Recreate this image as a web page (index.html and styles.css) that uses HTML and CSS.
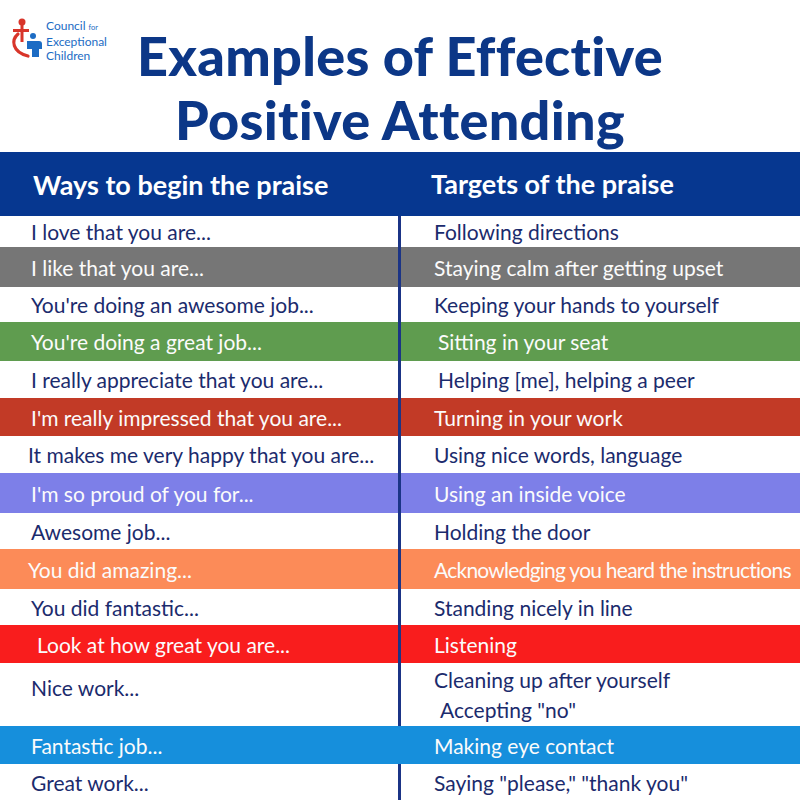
FILE: index.html
```html
<!DOCTYPE html>
<html lang="en">
<head>
<meta charset="utf-8">
<title>Examples of Effective Positive Attending</title>
<link rel="stylesheet" href="styles.css">
</head>
<body>
<div class="page">
  <header class="top">
    <div class="logo">
      <svg class="logo-mark" viewBox="0 0 36 40" width="36" height="40">
        <circle cx="14" cy="4" r="3.5" fill="#d8352a"/>
        <rect x="5" y="11" width="16" height="3" fill="#d8352a"/>
        <rect x="12.5" y="7" width="3" height="17" fill="#d8352a"/>
        <path d="M10 16 C3 22 4 34 20 38" fill="none" stroke="#d8352a" stroke-width="3.2" stroke-linecap="round"/>
        <circle cx="25" cy="18" r="3" fill="#1c6cc4"/>
        <path d="M19 23 L31 23 Q34 23 34 26 L34 31 L31 31 L31 39 L24 39 L24 31 L19 31 Z" fill="#1c6cc4"/>
      </svg>
      <div class="logo-text">
        <span class="lt-line">Council <small>for</small></span>
        <span class="lt-line">Exceptional</span>
        <span class="lt-line">Children</span>
      </div>
    </div>
    <h1 class="title">Examples of Effective<br>Positive Attending</h1>
    <div></div>
  </header>

  <section class="table">
    <div class="row head">
      <div class="cell">Ways to begin the praise</div>
      <div class="cell">Targets of the praise</div>
    </div>
    <div class="row r1">
      <div class="cell">I love that you are...</div>
      <div class="cell">Following directions</div>
    </div>
    <div class="row r2 gray">
      <div class="cell">I like that you are...</div>
      <div class="cell">Staying calm after getting upset</div>
    </div>
    <div class="row r3">
      <div class="cell">You're doing an awesome job...</div>
      <div class="cell">Keeping your hands to yourself</div>
    </div>
    <div class="row r4 green">
      <div class="cell">You're doing a great job...</div>
      <div class="cell shift">Sitting in your seat</div>
    </div>
    <div class="row r5">
      <div class="cell">I really appreciate that you are...</div>
      <div class="cell shift">Helping [me], helping a peer</div>
    </div>
    <div class="row r6 brick">
      <div class="cell">I'm really impressed that you are...</div>
      <div class="cell">Turning in your work</div>
    </div>
    <div class="row r7">
      <div class="cell outdent">It makes me very happy that you are...</div>
      <div class="cell">Using nice words, language</div>
    </div>
    <div class="row r8 purple">
      <div class="cell">I'm so proud of you for...</div>
      <div class="cell">Using an inside voice</div>
    </div>
    <div class="row r9">
      <div class="cell">Awesome job...</div>
      <div class="cell">Holding the door</div>
    </div>
    <div class="row r10 orange">
      <div class="cell outdent">You did amazing...</div>
      <div class="cell tight">Acknowledging you heard the instructions</div>
    </div>
    <div class="row r11">
      <div class="cell">You did fantastic...</div>
      <div class="cell">Standing nicely in line</div>
    </div>
    <div class="row r12 red">
      <div class="cell indent">Look at how great you are...</div>
      <div class="cell">Listening</div>
    </div>
    <div class="row r13 tall">
      <div class="cell">Nice work...</div>
      <div class="cell stack">
        <span>Cleaning up after yourself</span>
        <span class="indent-small">Accepting "no"</span>
      </div>
    </div>
    <div class="row r14 blue">
      <div class="cell">Fantastic job...</div>
      <div class="cell">Making eye contact</div>
    </div>
    <div class="row r15">
      <div class="cell">Great work...</div>
      <div class="cell">Saying "please," "thank you"</div>
    </div>
  </section>
</div>
</body>
</html>
```

FILE: styles.css
```css
* { box-sizing: border-box; }

html, body {
  margin: 0;
  padding: 0;
  background: #ffffff;
}

.page {
  width: 800px;
  height: 800px;
  overflow: hidden;
  font-family: "Lato", "Open Sans", sans-serif;
}

.top {
  height: 152px;
  display: grid;
  grid-template-columns: 1fr auto 1fr;
  align-items: start;
}

.logo {
  display: flex;
  align-items: flex-start;
  gap: 2px;
  padding: 18px 0 0 8px;
}

.logo-mark {
  display: block;
  flex: none;
}

.logo-text {
  display: flex;
  flex-direction: column;
  color: #1c6cc4;
  font-family: "Lato", sans-serif;
  font-size: 12px;
  line-height: 14px;
  padding-top: 1px;
}

.logo-text small {
  font-size: 7.5px;
}

.title {
  margin: 0;
  padding-top: 24px;
  color: #0c3787;
  font-family: "Lato", sans-serif;
  font-weight: 900;
  font-size: 54px;
  line-height: 64px;
  text-align: center;
  letter-spacing: 0.3px;
}

.table {
  display: flex;
  flex-direction: column;
}

.row {
  display: grid;
  grid-template-columns: 398px 402px;
  color: #1b2b6d;
  font-size: 21px;
}

.cell {
  display: flex;
  align-items: center;
  padding-left: 31px;
  white-space: nowrap;
}

.cell + .cell {
  border-left: 3px solid #1b3486;
  padding-left: 33px;
}

.head {
  height: 64px;
  background: #063790;
  color: #ffffff;
  font-weight: 700;
  font-size: 27px;
}

.head .cell {
  padding-left: 33px;
}

.head .cell + .cell {
  border-left: 3px solid #063790;
  padding-left: 30px;
  padding-bottom: 2px;
}

.r1 { height: 31px; }
.r2 { height: 40px; }
.r3 { height: 35px; }
.r4 { height: 39px; }
.r5 { height: 37px; }
.r6 { height: 38px; }
.r7 { height: 37px; }
.r8 { height: 40px; }
.r9 { height: 36px; }
.r10 { height: 40px; }
.r11 { height: 36px; }
.r12 { height: 38px; }
.r13 { height: 63px; }
.r14 { height: 38px; }
.r15 { height: 36px; }

.gray, .green, .brick, .purple, .orange, .red, .blue {
  color: #fbfbfb;
}

.gray { background: #767676; }
.green { background: #5f9c4f; }
.brick { background: #c23a26; }
.purple { background: #7d7fe8; }
.orange { background: #fc8b58; }
.red { background: #f91d1d; }
.blue { background: #168fdc; }

.blue .cell + .cell {
  border-left-color: #168fdc;
}

.indent {
  padding-left: 37px;
}

.outdent {
  padding-left: 28px;
}

.cell.shift {
  padding-left: 37px;
}

.cell.tight {
  letter-spacing: -0.75px;
}

.tall .cell {
  align-items: flex-start;
  padding-top: 12px;
}

.tall .stack {
  flex-direction: column;
  padding-top: 2px;
  line-height: 30px;
}

.indent-small {
  padding-left: 6px;
}
```
